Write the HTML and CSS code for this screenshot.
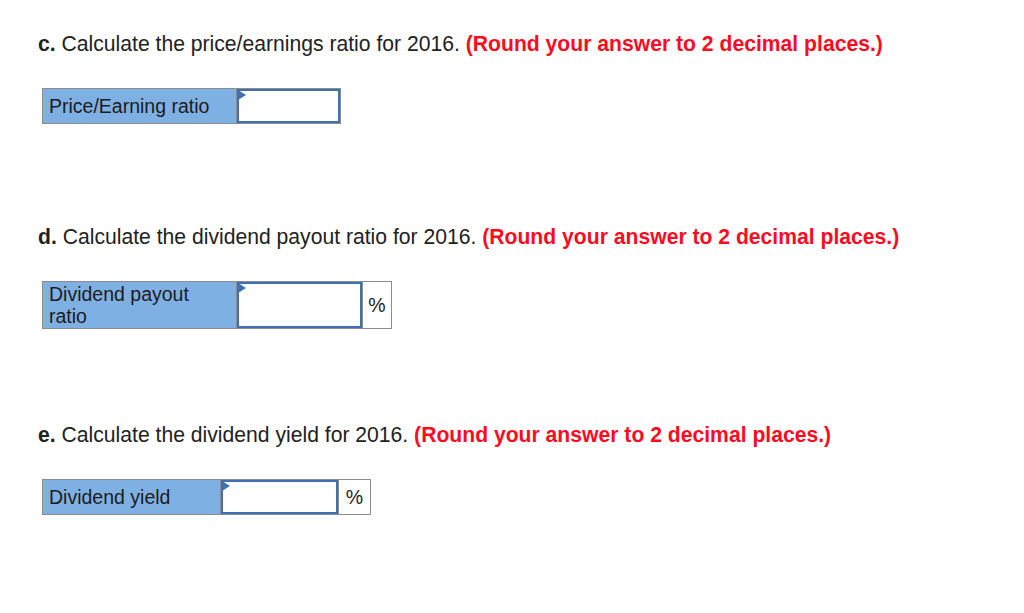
FILE: index.html
```html
<!DOCTYPE html>
<html>
<head>
<meta charset="utf-8">
<link rel="stylesheet" href="styles.css">
</head>
<body>
<div class="page">
  <section class="part part-c">
    <p class="question"><b>c.</b> Calculate the price/earnings ratio for 2016. <span class="hint">(Round your answer to 2 decimal places.)</span></p>
    <div class="answer">
      <div class="label label-wide">Price/Earning ratio</div>
      <div class="input input-c"><span class="flag"></span></div>
    </div>
  </section>
  <section class="part part-d">
    <p class="question"><b>d.</b> Calculate the dividend payout ratio for 2016. <span class="hint">(Round your answer to 2 decimal places.)</span></p>
    <div class="answer answer-tall">
      <div class="label label-wide">Dividend payout<br>ratio</div>
      <div class="input input-d"><span class="flag"></span></div>
      <div class="unit unit-d">%</div>
    </div>
  </section>
  <section class="part part-e">
    <p class="question"><b>e.</b> Calculate the dividend yield for 2016. <span class="hint">(Round your answer to 2 decimal places.)</span></p>
    <div class="answer">
      <div class="label label-narrow">Dividend yield</div>
      <div class="input input-e"><span class="flag"></span></div>
      <div class="unit unit-e">%</div>
    </div>
  </section>
</div>
</body>
</html>
```
FILE: styles.css
```css
html, body {
  margin: 0;
  padding: 0;
  background: #ffffff;
}
body {
  font-family: "Liberation Sans", Arial, sans-serif;
  color: #222222;
}
.page {
  padding: 33px 0 0 38px;
}
.part {
  display: flex;
  flex-direction: column;
  align-items: flex-start;
}
.part-c { margin-bottom: 102px; }
.part-d { margin-bottom: 95px; }
.question {
  margin: 0 0 33px 0;
  font-size: 21.15px;
  line-height: 22px;
}
.question b {
  font-weight: bold;
}
.hint {
  color: #ff0a1e;
  font-weight: bold;
}
.answer {
  display: flex;
  margin-left: 4px;
  height: 36px;
  box-sizing: border-box;
  border: 1px solid #8c8c8c;
}
.answer-tall {
  height: 48px;
}
.label {
  box-sizing: border-box;
  background: #7fb0e4;
  color: #1c1c1c;
  font-size: 19.5px;
  line-height: 22px;
  padding: 0 6px;
  display: flex;
  align-items: center;
}
.label-wide { width: 193px; }
.label-narrow { width: 177px; }
.input {
  position: relative;
  box-sizing: border-box;
  border-left: 1px solid #8c8c8c;
  background: #ffffff;
  box-shadow: inset 0 0 0 2px #3e70b2;
}
.input-c { width: 104px; }
.input-d { width: 126px; }
.input-e { width: 118px; }
.flag {
  position: absolute;
  left: 1px;
  top: 1px;
  width: 0;
  height: 0;
  border-top: 5px solid transparent;
  border-bottom: 5px solid transparent;
  border-left: 8px solid #3e70b2;
}
.unit {
  box-sizing: border-box;
  border-left: 1px solid #8c8c8c;
  background: #ffffff;
  font-size: 19.5px;
  display: flex;
  align-items: center;
  justify-content: center;
  color: #1c1c1c;
}
.unit-d { width: 29px; }
.unit-e { width: 32px; }
```
